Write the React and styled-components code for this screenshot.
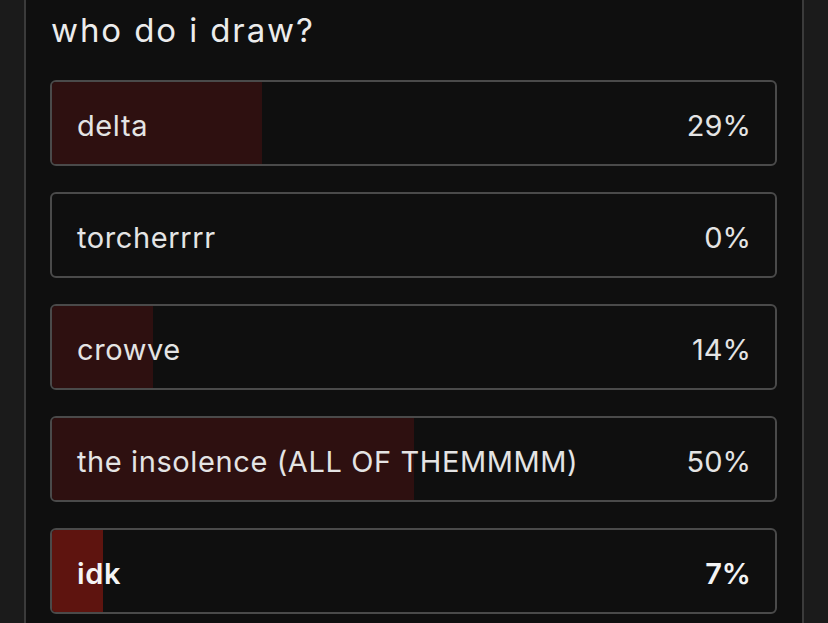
import React from 'react'
import styled, { createGlobalStyle } from 'styled-components'

const GlobalStyle = createGlobalStyle`
  html, body {
    margin: 0;
    padding: 0;
    background: #1b1b1b;
  }
  body {
    font-family: Inter, "Noto Sans", "Liberation Sans", sans-serif;
    color: #e6e6e6;
  }
`

const options = [
  { label: 'delta', pct: 29 },
  { label: 'torcherrrr', pct: 0 },
  { label: 'crowve', pct: 14 },
  { label: 'the insolence (ALL OF THEMMMM)', pct: 50 },
  { label: 'idk', pct: 7, mine: true },
]

const Page = styled.div`
  height: 623px;
  overflow: hidden;
  padding: 0 24px;
`

const Panel = styled.section`
  background: #0f0f0f;
  border-left: 2px solid #3b3b3b;
  border-right: 2px solid #3b3b3b;
  padding: 10px 25px 30px 24px;
  min-height: 623px;
  box-sizing: border-box;
`

const Title = styled.h2`
  margin: 0 0 30px 1px;
  font-size: 33px;
  font-weight: 400;
  line-height: 40px;
  letter-spacing: 1.9px;
  color: #ececec;
`

const List = styled.div`
  display: flex;
  flex-direction: column;
  gap: 26px;
`

const Option = styled.div`
  position: relative;
  height: 86px;
  border: 2px solid #4a4a4a;
  border-radius: 6px;
  background: #0f0f0f;
  overflow: hidden;
  box-sizing: border-box;
`

const Fill = styled.div`
  position: absolute;
  left: 0;
  top: 0;
  bottom: 0;
  background: ${p => (p.$mine ? '#5e140f' : '#2e1010')};
`

const Row = styled.div`
  position: relative;
  display: flex;
  align-items: center;
  justify-content: space-between;
  height: 100%;
  box-sizing: border-box;
  padding: 4px 24px 0 25px;
  font-size: 29px;
  letter-spacing: 0.6px;
  font-weight: ${p => (p.$mine ? 600 : 400)};
  color: ${p => (p.$mine ? '#f4f4f4' : '#e4e4e4')};
`

const Pct = styled.span`
  letter-spacing: 0;
`

export default function App() {
  return (
    <Page>
      <GlobalStyle />
      <Panel>
        <Title>who do i draw?</Title>
        <List>
          {options.map(o => (
            <Option key={o.label}>
              <Fill $mine={o.mine} style={{ width: `${o.pct}%` }} />
              <Row $mine={o.mine}>
                <span>{o.label}</span>
                <Pct>{o.pct}%</Pct>
              </Row>
            </Option>
          ))}
        </List>
      </Panel>
    </Page>
  )
}
